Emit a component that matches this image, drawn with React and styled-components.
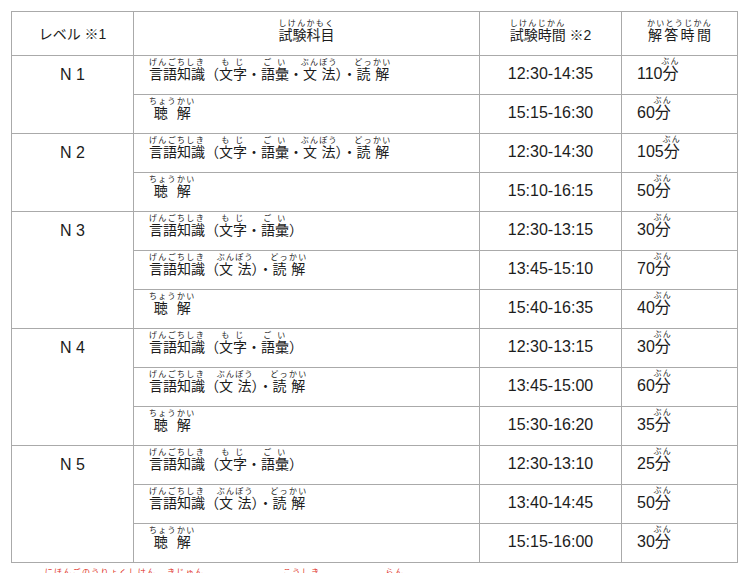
import React from 'react';
import styled, { createGlobalStyle } from 'styled-components';

const GlobalStyle = createGlobalStyle`
  html, body { margin: 0; padding: 0; background: #fff; }
  body {
    font-family: "Liberation Sans", "Noto Sans CJK JP", sans-serif;
    color: #1c1c1c;
  }
  rt {
    font-size: 8px;
    letter-spacing: 1.3px;
    color: inherit;
  }
`;

const Page = styled.div`
  padding: 11px 0 0 11px;
`;

const Table = styled.table`
  border-collapse: collapse;
  table-layout: fixed;
  width: 726px;
`;

const Col = styled.col`
  width: ${(p) => p.$w}px;
`;

const HeadRow = styled.tr`
  height: 44px;
`;

const BodyRow = styled.tr`
  height: 39px;
`;

const Th = styled.th`
  border: 1px solid #aaaaaa;
  font-weight: normal;
  font-size: 14px;
  line-height: 20px;
  text-align: center;
  vertical-align: bottom;
  padding: 0 0 ${(p) => p.$pb ?? 10}px 0;
`;

const LevelCell = styled.td`
  border: 1px solid #aaaaaa;
  font-size: 16px;
  line-height: 20px;
  text-align: center;
  vertical-align: top;
  padding: 9px 0 0 0;
`;

const SubjectCell = styled.td`
  border: 1px solid #aaaaaa;
  font-size: 14px;
  line-height: 20px;
  text-align: left;
  vertical-align: bottom;
  padding: 0 0 10px 15px;
  white-space: nowrap;
`;

const TimeCell = styled.td`
  border: 1px solid #aaaaaa;
  font-size: 16px;
  line-height: 20px;
  text-align: center;
  vertical-align: bottom;
  padding: 0 0 10px 0;
`;

const DurationCell = styled.td`
  border: 1px solid #aaaaaa;
  font-size: 16px;
  line-height: 20px;
  text-align: left;
  vertical-align: bottom;
  padding: 0 0 10px 15px;
`;

const Note = styled.p`
  margin: 5px 0 0 9px;
  font-size: 14px;
  line-height: 20px;
  color: #e0301e;
`;

const R = ({ t, children }) => (
  <ruby>
    {children}
    <rt>{t}</rt>
  </ruby>
);

const Vocab = () => (
  <>
    <R t="げんごちしき">言語知識</R>（<R t="もじ">文字</R>・<R t="ごい">語彙</R>）
  </>
);

const Full = () => (
  <>
    <R t="げんごちしき">言語知識</R>（<R t="もじ">文字</R>・<R t="ごい">語彙</R>・<R t="ぶんぽう">文法</R>）・<R t="どっかい">読解</R>
  </>
);

const Grammar = () => (
  <>
    <R t="げんごちしき">言語知識</R>（<R t="ぶんぽう">文法</R>）・<R t="どっかい">読解</R>
  </>
);

const Listen = () => <R t="ちょうかい">聴解</R>;

const levels = [
  {
    name: 'N 1',
    rows: [
      [Full, '12:30-14:35', '110'],
      [Listen, '15:15-16:30', '60'],
    ],
  },
  {
    name: 'N 2',
    rows: [
      [Full, '12:30-14:30', '105'],
      [Listen, '15:10-16:15', '50'],
    ],
  },
  {
    name: 'N 3',
    rows: [
      [Vocab, '12:30-13:15', '30'],
      [Grammar, '13:45-15:10', '70'],
      [Listen, '15:40-16:35', '40'],
    ],
  },
  {
    name: 'N 4',
    rows: [
      [Vocab, '12:30-13:15', '30'],
      [Grammar, '13:45-15:00', '60'],
      [Listen, '15:30-16:20', '35'],
    ],
  },
  {
    name: 'N 5',
    rows: [
      [Vocab, '12:30-13:10', '25'],
      [Grammar, '13:40-14:45', '50'],
      [Listen, '15:15-16:00', '30'],
    ],
  },
];

export default function App() {
  return (
    <>
      <GlobalStyle />
      <Page>
        <Table>
          <colgroup>
            <Col $w={122} />
            <Col $w={346} />
            <Col $w={142} />
            <Col $w={116} />
          </colgroup>
          <thead>
            <HeadRow>
              <Th $pb={11}>レベル ※1</Th>
              <Th>
                <R t="しけんかもく">試験科目</R>
              </Th>
              <Th>
                <R t="しけんじかん">試験時間</R> ※2
              </Th>
              <Th>
                <R t="かいとうじかん">解答時間</R>
              </Th>
            </HeadRow>
          </thead>
          <tbody>
            {levels.map((lv) =>
              lv.rows.map(([Subject, time, mins], i) => (
                <BodyRow key={lv.name + i}>
                  {i === 0 && <LevelCell rowSpan={lv.rows.length}>{lv.name}</LevelCell>}
                  <SubjectCell>
                    <Subject />
                  </SubjectCell>
                  <TimeCell>{time}</TimeCell>
                  <DurationCell>
                    {mins}
                    <R t="ぶん">分</R>
                  </DurationCell>
                </BodyRow>
              ))
            )}
          </tbody>
        </Table>
        <Note>
          ※1 <R t="にほんごのうりょくしけん">日本語能力試験</R>の<R t="きじゅん">基準</R>については、<R t="こうしき">公式</R>サイトをご<R t="らん">覧</R>ください。
        </Note>
      </Page>
    </>
  );
}
